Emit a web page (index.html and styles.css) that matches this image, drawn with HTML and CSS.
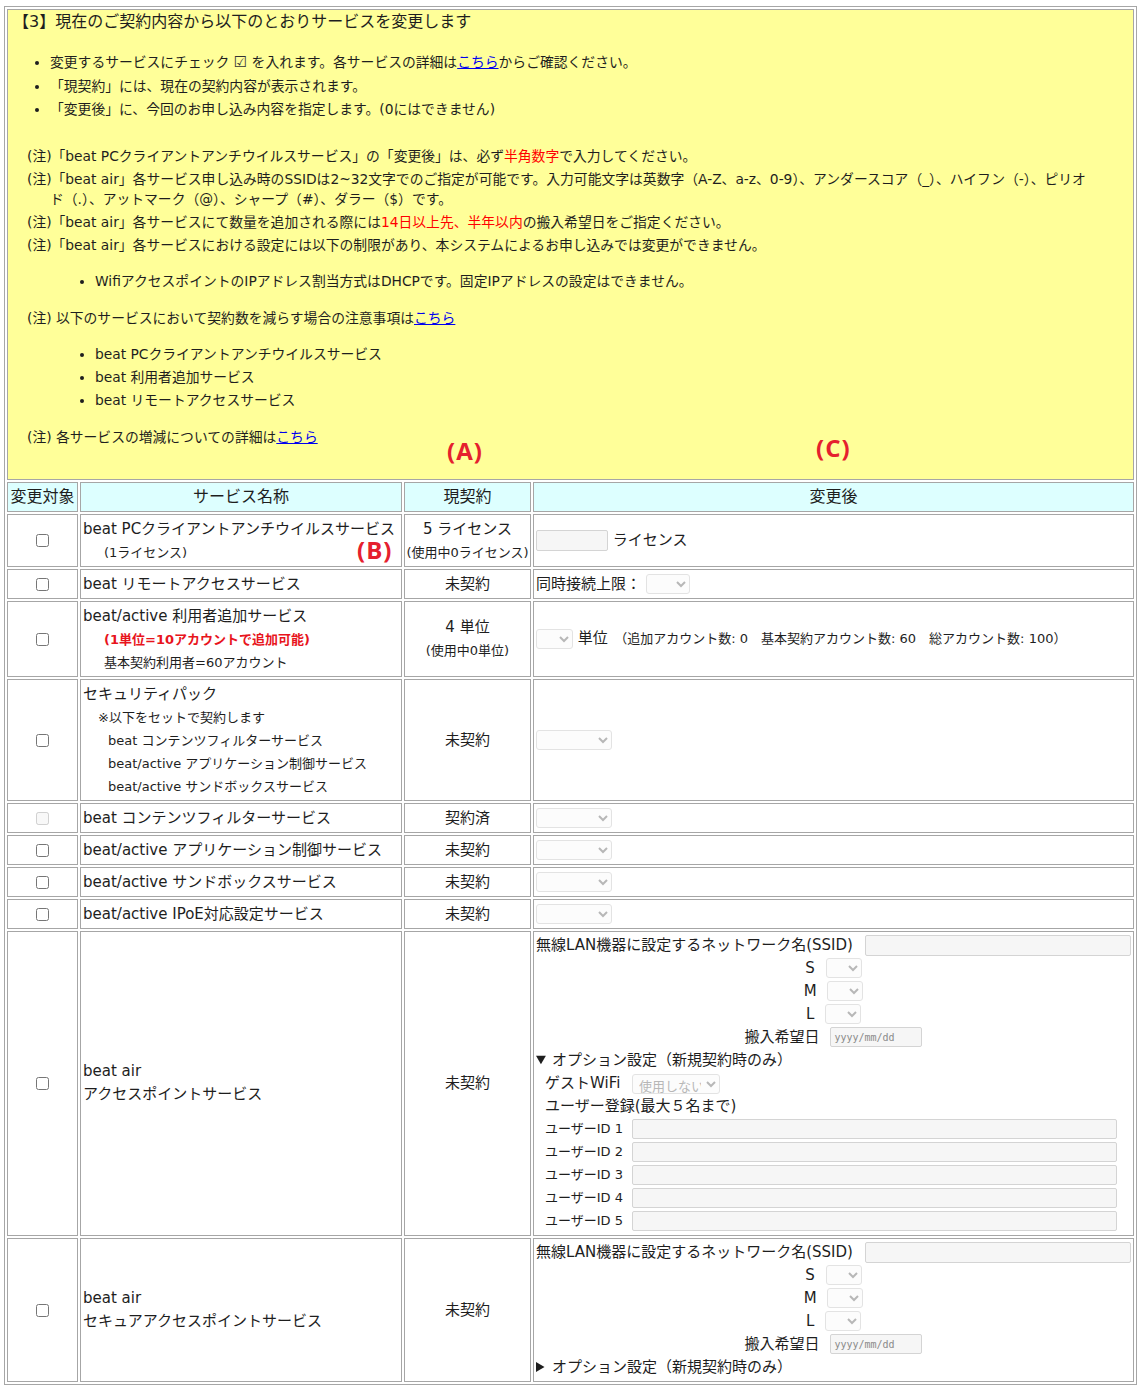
FILE: index.html
```html
<!DOCTYPE html>
<html lang="ja">
<head>
    <meta charset="UTF-8" />
    <meta name="viewport" content="width=device-width, initial-scale=1" />
    <title>サービス変更</title>
    <link rel="stylesheet" href="styles.css">
</head>
<body>
    <table class="svc-table">
        <tr>
            <td colspan="4" class="guide">
                <h2 class="guide-title">【3】現在のご契約内容から以下のとおりサービスを変更します</h2>
                <ul class="guide-list">
                    <li>変更するサービスにチェック <span class="check-mark">☑</span> を入れます。各サービスの詳細は<a href="#">こちら</a>からご確認ください。</li>
                    <li>「現契約」には、現在の契約内容が表示されます。</li>
                    <li>「変更後」に、今回のお申し込み内容を指定します。(0にはできません)</li>
                </ul>
                <p class="note">(注)「beat PCクライアントアンチウイルスサービス」の「変更後」は、必ず<span class="warn">半角数字</span>で入力してください。</p>
                <p class="note">(注)「beat air」各サービス申し込み時のSSIDは2~32文字でのご指定が可能です。入力可能文字は英数字（A-Z、a-z、0-9）、アンダースコア（_）、ハイフン（-）、ピリオ<br>ド（.）、アットマーク（@）、シャープ（#）、ダラー（$）です。</p>
                <p class="note">(注)「beat air」各サービスにて数量を追加される際には<span class="warn">14日以上先、半年以内</span>の搬入希望日をご指定ください。</p>
                <p class="note">(注)「beat air」各サービスにおける設定には以下の制限があり、本システムによるお申し込みでは変更ができません。</p>
                <ul class="note-list">
                    <li>WifiアクセスポイントのIPアドレス割当方式はDHCPです。固定IPアドレスの設定はできません。</li>
                </ul>
                <p class="note">(注) 以下のサービスにおいて契約数を減らす場合の注意事項は<a href="#">こちら</a></p>
                <ul class="note-list">
                    <li>beat PCクライアントアンチウイルスサービス</li>
                    <li>beat 利用者追加サービス</li>
                    <li>beat リモートアクセスサービス</li>
                </ul>
                <p class="note">(注) 各サービスの増減についての詳細は<a href="#">こちら</a></p>
            </td>
        </tr>
        <tr class="head">
            <th class="c-check">変更対象</th>
            <th class="c-name">サービス名称</th>
            <th class="c-now">現契約</th>
            <th>変更後</th>
        </tr>
        <tr>
            <td class="c-check"><input type="checkbox"></td>
            <td class="c-name">beat PCクライアントアンチウイルスサービス<div class="sub sub-indent">(1ライセンス)</div></td>
            <td class="c-now">5 ライセンス<div class="sub">(使用中0ライセンス)</div></td>
            <td class="c-after"><input type="text" class="field field-num" disabled> ライセンス</td>
        </tr>
        <tr>
            <td class="c-check"><input type="checkbox"></td>
            <td class="c-name">beat リモートアクセスサービス</td>
            <td class="c-now">未契約</td>
            <td class="c-after">同時接続上限： <select class="sel sel-conn" disabled></select></td>
        </tr>
        <tr>
            <td class="c-check"><input type="checkbox"></td>
            <td class="c-name">beat/active 利用者追加サービス
                <div class="sub sub-indent sub-warn">(1単位=10アカウントで追加可能)</div>
                <div class="sub sub-indent">基本契約利用者=60アカウント</div>
            </td>
            <td class="c-now">4 単位<div class="sub">(使用中0単位)</div></td>
            <td class="c-after"><select class="sel sel-unit" disabled></select> 単位<span class="acct-info">　（追加アカウント数: 0　基本契約アカウント数: 60　総アカウント数: 100）</span></td>
        </tr>
        <tr>
            <td class="c-check"><input type="checkbox"></td>
            <td class="c-name">セキュリティパック
                <div class="sub pack-note">※以下をセットで契約します</div>
                <div class="sub pack-item">beat コンテンツフィルターサービス</div>
                <div class="sub pack-item">beat/active アプリケーション制御サービス</div>
                <div class="sub pack-item">beat/active サンドボックスサービス</div>
            </td>
            <td class="c-now">未契約</td>
            <td class="c-after"><select class="sel sel-wide" disabled></select></td>
        </tr>
        <tr>
            <td class="c-check"><input type="checkbox" disabled></td>
            <td class="c-name">beat コンテンツフィルターサービス</td>
            <td class="c-now">契約済</td>
            <td class="c-after"><select class="sel sel-wide" disabled></select></td>
        </tr>
        <tr>
            <td class="c-check"><input type="checkbox"></td>
            <td class="c-name">beat/active アプリケーション制御サービス</td>
            <td class="c-now">未契約</td>
            <td class="c-after"><select class="sel sel-wide" disabled></select></td>
        </tr>
        <tr>
            <td class="c-check"><input type="checkbox"></td>
            <td class="c-name">beat/active サンドボックスサービス</td>
            <td class="c-now">未契約</td>
            <td class="c-after"><select class="sel sel-wide" disabled></select></td>
        </tr>
        <tr>
            <td class="c-check"><input type="checkbox"></td>
            <td class="c-name">beat/active IPoE対応設定サービス</td>
            <td class="c-now">未契約</td>
            <td class="c-after"><select class="sel sel-wide" disabled></select></td>
        </tr>
        <tr>
            <td class="c-check"><input type="checkbox"></td>
            <td class="c-name"><div class="two-line">beat air<br>アクセスポイントサービス</div></td>
            <td class="c-now">未契約</td>
            <td class="c-after air">
                <div class="ssid-line">無線LAN機器に設定するネットワーク名(SSID)<input type="text" class="field field-ssid" disabled></div>
                <div class="size-line">S <select class="sel sel-size" disabled></select></div>
                <div class="size-line">M <select class="sel sel-size" disabled></select></div>
                <div class="size-line">L <select class="sel sel-size" disabled></select></div>
                <div class="size-line">搬入希望日 <input type="text" class="field field-date" placeholder="yyyy/mm/dd" disabled></div>
                <details class="option" open>
                    <summary>オプション設定（新規契約時のみ）</summary>
                    <div class="option-body">
                        <span class="opt-label">ゲストWiFi</span>
                        <span><select class="sel sel-guest" disabled><option>使用しない</option></select></span>
                        <span class="opt-wide">ユーザー登録(最大５名まで)</span>
                        <span class="opt-label opt-small">ユーザーID 1</span><input type="text" class="field field-user" disabled>
                        <span class="opt-label opt-small">ユーザーID 2</span><input type="text" class="field field-user" disabled>
                        <span class="opt-label opt-small">ユーザーID 3</span><input type="text" class="field field-user" disabled>
                        <span class="opt-label opt-small">ユーザーID 4</span><input type="text" class="field field-user" disabled>
                        <span class="opt-label opt-small">ユーザーID 5</span><input type="text" class="field field-user" disabled>
                    </div>
                </details>
            </td>
        </tr>
        <tr>
            <td class="c-check"><input type="checkbox"></td>
            <td class="c-name"><div class="two-line">beat air<br>セキュアアクセスポイントサービス</div></td>
            <td class="c-now">未契約</td>
            <td class="c-after air">
                <div class="ssid-line">無線LAN機器に設定するネットワーク名(SSID)<input type="text" class="field field-ssid" disabled></div>
                <div class="size-line">S <select class="sel sel-size" disabled></select></div>
                <div class="size-line">M <select class="sel sel-size" disabled></select></div>
                <div class="size-line">L <select class="sel sel-size" disabled></select></div>
                <div class="size-line">搬入希望日 <input type="text" class="field field-date" placeholder="yyyy/mm/dd" disabled></div>
                <details class="option">
                    <summary>オプション設定（新規契約時のみ）</summary>
                </details>
            </td>
        </tr>
    </table>

    <!-- 説明用の注記ラベル -->
    <span class="tag tag-a">(A)</span>
    <span class="tag tag-b">(B)</span>
    <span class="tag tag-c">(C)</span>
</body>
</html>
```

FILE: styles.css
```css
* {
    box-sizing: border-box;
}
body {
    margin: 6px 2px 8px 4px;
    font-family: "DejaVu Sans", "Noto Sans CJK JP", sans-serif;
    font-size: 15px;
    color: #1e1e1e;
    background: #fff;
}
a {
    color: #0000ee;
}
.svc-table {
    width: 1133px;
    border: 1px solid #a6a6a6;
    border-spacing: 2px;
}
.svc-table th, .svc-table td {
    border: 1px solid #a6a6a6;
    padding: 2px;
    line-height: 24px;
}

/* 説明エリア */
.guide {
    background: #ffff99;
    padding: 1px 5px 29px !important;
    font-size: 13.8px;
}
.guide-title {
    margin: 0;
    font-size: 16px;
    font-weight: normal;
    line-height: 22px;
}
.guide-list {
    margin: 18px 0 24px;
    padding-left: 37px;
}
.guide-list li {
    line-height: 23.5px;
}
.check-mark {
    font-size: 15px;
    color: #333;
}
.note {
    margin: 3px 0 3px 14px;
    padding-left: 23px;
    text-indent: -23px;
    line-height: 20px;
}
.note-list {
    margin: 15px 0;
    padding-left: 82px;
}
.note-list li {
    line-height: 23px;
}
.warn {
    color: #ff0000;
}

/* 見出し行 */
.head th {
    background: #ddffff;
    font-weight: normal;
    font-size: 16px;
    text-align: center;
}
th.c-check { width: 71px; }
th.c-name { width: 322px; }
th.c-now { width: 127px; }

td.c-check, td.c-now {
    text-align: center;
}
td.c-name, td.c-after {
    text-align: left;
}
td.c-now {
    padding: 2px 0;
}
.c-check input {
    margin: 0;
    vertical-align: middle;
}
.sub {
    font-size: 13px;
    line-height: 23px;
    white-space: nowrap;
}
.sub-indent { padding-left: 21px; }
.sub-warn {
    color: #e8141c;
    font-weight: bold;
}
.pack-note { padding-left: 15px; }
.pack-item { padding-left: 25px; }
.two-line {
    line-height: 23px;
}
.acct-info {
    font-size: 13px;
}

/* 入力部品 */
.field {
    height: 21px;
    border: 1px solid #d4d4d4;
    border-radius: 2px;
    background: #f6f6f6;
    padding: 0 3px;
    vertical-align: middle;
    font-size: 13px;
}
.field-num { width: 72px; }
.field-date {
    width: 92px;
    height: 20px;
    margin-left: 6px;
    font-family: "DejaVu Sans Mono", monospace;
    font-size: 10px;
}
.field-date::placeholder {
    color: #8a8a8a;
}
.field-user {
    width: 485px;
    height: 20px;
}
.sel {
    height: 20px;
    padding: 0 2px;
    border: 1px solid #d8d8d8;
    border-radius: 3px;
    background-color: #fbfbfb;
    color: #9a9a9a;
    font-family: "Noto Sans CJK JP", sans-serif;
    font-size: 13px;
    vertical-align: middle;
}
.sel-conn { width: 44px; }
.sel-unit { width: 37px; }
.sel-wide { width: 76px; }
.sel-size { width: 36px; margin-left: 6px; }
.sel-guest { width: 88px; }

/* beat air 行 */
.air > div, .air summary {
    line-height: 23px;
}
.ssid-line {
    display: flex;
    align-items: center;
    gap: 12px;
    height: 23px;
}
.field-ssid {
    flex: 1;
    height: 21px;
}
.size-line {
    text-align: center;
    height: 23px;
}
.option summary {
    cursor: default;
    height: 23px;
}
.option-body {
    display: grid;
    grid-template-columns: 87px 485px;
    grid-auto-rows: 23px;
    align-items: center;
    padding-left: 9px;
}
.opt-wide {
    grid-column: 1 / 3;
}
.opt-small {
    font-size: 13px;
}

/* 注記ラベル (A)(B)(C) */
.tag {
    position: absolute;
    font-family: "Open Sans", sans-serif;
    font-weight: 700;
    font-size: 24px;
    line-height: 1;
    letter-spacing: 1px;
    color: #e5202e;
}
.tag-a { left: 447px; top: 439px; }
.tag-b { left: 357px; top: 538px; }
.tag-c { left: 816px; top: 436px; }
```
